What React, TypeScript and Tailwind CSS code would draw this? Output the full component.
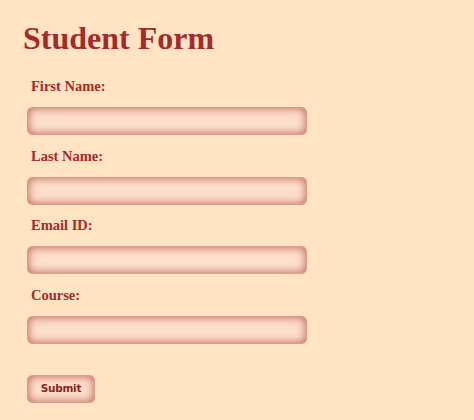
const fields = ['First Name:', 'Last Name:', 'Email ID:', 'Course:'];

const boxStyle =
  'rounded-[5px] border border-[#d99c8e] bg-[#fcdfcc] shadow-[inset_0_0_10px_#c05a4c]';

export default function App() {
  return (
    <div className="min-h-[420px] w-full bg-[#ffe4c4] pl-[23px] pt-[20px] font-['Liberation_Serif',serif] text-[#a52a2a]">
      <h1 className="text-[32px] font-bold leading-[37px]">Student Form</h1>
      <form className="mt-[21px] flex flex-col gap-[12.5px] pl-[4px]">
        {fields.map((label) => (
          <div key={label} className="flex flex-col">
            <label className="mb-3 pl-[4px] text-[14.5px] font-bold leading-[17px]">{label}</label>
            <input type="text" className={`h-[28px] w-[280px] outline-none ${boxStyle}`} />
          </div>
        ))}
        <div className="mt-[18.5px]">
          <button
            type="button"
            className={`h-[28px] w-[68px] font-['DejaVu_Sans',sans-serif] text-[10.5px] font-bold tracking-[-0.3px] text-[#8e1f1f] ${boxStyle}`}
          >
            Submit
          </button>
        </div>
      </form>
    </div>
  );
}
